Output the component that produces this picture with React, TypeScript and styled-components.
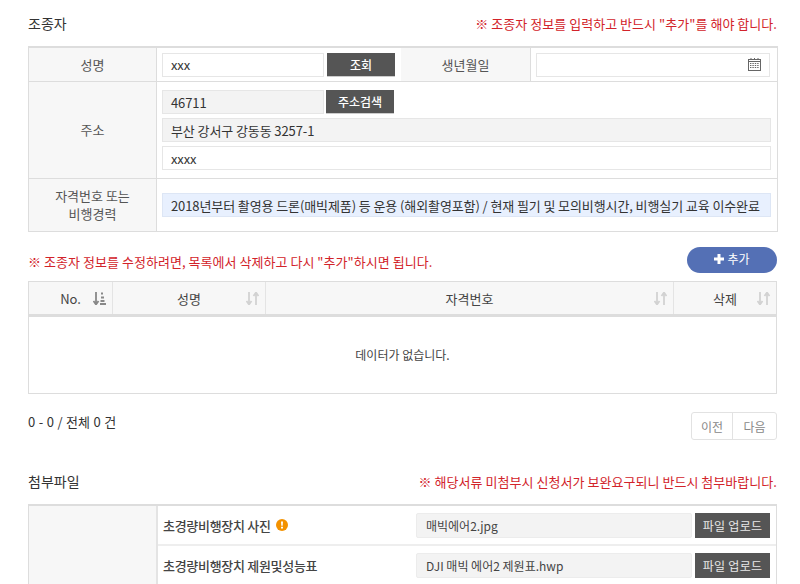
import { FC } from "react";
import styled, { createGlobalStyle } from "styled-components";

const GlobalStyle = createGlobalStyle`
  html, body {
    margin: 0;
    padding: 0;
    background: #fff;
    overflow: hidden;
  }
  body {
    font-family: "Noto Sans CJK KR", "Noto Sans", sans-serif;
    font-size: 13px;
    color: #333;
  }
`;

const Page = styled.div`
  width: 800px;
  height: 584px;
  overflow: hidden;
  box-sizing: border-box;
  padding: 12px 23px 0 28px;
`;

const SectionHead = styled.div<{ $height: number; $top?: number; $bottom?: number }>`
  display: flex;
  justify-content: space-between;
  align-items: center;
  height: ${(p) => p.$height}px;
  margin-top: ${(p) => p.$top ?? 0}px;
  margin-bottom: ${(p) => p.$bottom ?? 0}px;
`;

const Title = styled.h3`
  margin: 0;
  font-size: 14px;
  font-weight: 400;
  color: #333;
`;

const Notice = styled.p`
  margin: 0;
  font-size: 13px;
  color: #d2232a;
  letter-spacing: 0.04px;
`;

const ListNotice = styled(Notice)`
  margin-top: 3px;
`;

const FormBox = styled.div`
  border: 1px solid #ddd;
  border-top-width: 2px;
  margin-right: -1px;
`;

const Row = styled.div<{ $height: number; $last?: boolean }>`
  display: flex;
  height: ${(p) => p.$height}px;
  border-bottom: ${(p) => (p.$last ? "none" : "1px solid #ddd")};
`;

const Label = styled.div<{ $width: number }>`
  flex: none;
  box-sizing: border-box;
  width: ${(p) => p.$width}px;
  display: flex;
  align-items: center;
  justify-content: center;
  text-align: center;
  line-height: 18px;
  background: #f7f7f7;
  border-right: 1px solid #ddd;
  color: #555;
`;

const Cell = styled.div<{ $width?: number; $right?: number }>`
  flex: ${(p) => (p.$width ? "none" : "1")};
  width: ${(p) => (p.$width ? `${p.$width}px` : "auto")};
  min-width: 0;
  box-sizing: border-box;
  display: flex;
  align-items: center;
  gap: 3px;
  padding: 0 ${(p) => p.$right ?? 6}px 0 5px;
`;

const Field = styled.div<{ $tone?: "plain" | "gray" | "blue"; $width?: number }>`
  flex: ${(p) => (p.$width ? "none" : "1")};
  width: ${(p) => (p.$width ? `${p.$width}px` : "auto")};
  min-width: 0;
  height: 24px;
  box-sizing: border-box;
  display: flex;
  align-items: center;
  justify-content: space-between;
  padding: 0 8px;
  white-space: nowrap;
  overflow: hidden;
  font-size: 13px;
  letter-spacing: -0.1px;
  color: #333;
  border: 1px solid ${(p) => (p.$tone === "blue" ? "#dde6f5" : "#e6e6e6")};
  background: ${(p) =>
    p.$tone === "gray" ? "#f3f3f3" : p.$tone === "blue" ? "#e8f0fe" : "#fff"};
`;

const StackCell = styled.div`
  flex: 1;
  display: flex;
  flex-direction: column;
  justify-content: center;
  gap: 4px;
  padding: 0 6px 0 5px;

  & > ${Field} {
    flex: none;
  }
`;

const InputLine = styled.div`
  display: flex;
  gap: 2px;
`;

const DarkButton = styled.button<{ $width: number }>`
  flex: none;
  width: ${(p) => p.$width}px;
  height: 24px;
  padding: 0;
  border: 1px solid #ccc;
  border-width: 0 0 1px;
  background: #555;
  color: #fff;
  font-family: inherit;
  font-size: 12px;
  font-weight: 500;
`;

const AddButton = styled.button`
  width: 90px;
  height: 26px;
  margin-top: -1px;
  padding: 0 0 2px;
  border: 0;
  border-radius: 13px;
  background: #5470b5;
  color: #fff;
  font-family: inherit;
  font-size: 12px;
  display: flex;
  align-items: center;
  justify-content: center;
  gap: 3px;
`;

const ListBox = styled.div`
  border: 1px solid #ddd;
`;

const ListHead = styled.div`
  display: grid;
  grid-template-columns: 84px 153px 408px 1fr;
  height: 32px;
  background: #f7f7f7;
  border-bottom: 3px solid #ddd;
`;

const HeadCell = styled.div<{ $last?: boolean }>`
  position: relative;
  display: flex;
  align-items: center;
  justify-content: center;
  color: #444;
  border-right: ${(p) => (p.$last ? "none" : "1px solid #e4e4e4")};
`;

const SortMark = styled.svg`
  position: absolute;
  right: 6px;
  top: 10px;
`;

const EmptyBody = styled.div`
  height: 76px;
  padding-bottom: 2px;
  box-sizing: border-box;
  display: flex;
  align-items: center;
  justify-content: center;
  font-size: 12px;
  color: #444;
`;

const PagerRow = styled.div`
  display: flex;
  justify-content: space-between;
  align-items: center;
  margin-top: 18px;
  height: 28px;
`;

const PageInfo = styled.span`
  font-size: 13px;
  word-spacing: 0.6px;
  color: #333;
  margin-top: -10px;
`;

const Pager = styled.div`
  display: flex;
  height: 28px;
  box-sizing: border-box;
  border: 1px solid #e2e2e2;
  border-radius: 3px;
`;

const PagerItem = styled.span<{ $first?: boolean }>`
  width: ${(p) => (p.$first ? 41 : 43)}px;
  box-sizing: border-box;
  display: flex;
  align-items: center;
  justify-content: center;
  font-size: 12px;
  color: #888;
  border-right: ${(p) => (p.$first ? "1px solid #e2e2e2" : "none")};
`;

const FileBox = styled.div`
  display: flex;
  border: 1px solid #ddd;
  border-top-width: 2px;
`;

const FileSide = styled.div`
  width: 129px;
  box-sizing: border-box;
  flex: none;
  background: #f7f7f7;
  border-right: 2px solid #e4e4e4;
`;

const FileRows = styled.div`
  flex: 1;
`;

const FileRow = styled.div`
  display: grid;
  grid-template-columns: 250px 1fr 75px;
  align-items: center;
  column-gap: 3px;
  height: 38px;
  padding: 0 6px 0 5px;
  border-bottom: 2px solid #eee;
`;

const FileName = styled.div`
  display: flex;
  align-items: center;
  gap: 5px;
  font-size: 13px;
  letter-spacing: -0.3px;
  font-weight: 500;
  color: #444;
`;

const FileField = styled.div`
  height: 25px;
  box-sizing: border-box;
  display: flex;
  align-items: center;
  padding: 0 9px;
  font-size: 12px;
  color: #444;
  background: #f3f3f3;
  border: 1px solid #ececec;
  border-radius: 2px;
`;

const UploadButton = styled.button`
  height: 25px;
  padding: 0;
  border: 0;
  background: #555;
  color: #e8e8e8;
  font-family: inherit;
  font-size: 12px;
  letter-spacing: 0.3px;
`;

const CalendarIcon: FC = () => (
  <svg width="13" height="13" viewBox="0 0 13 13" fill="none" stroke="#666">
    <rect x="0.5" y="1.5" width="12" height="11" />
    <path d="M0.5 3.5h12" />
    <path d="M3 0v2M6.5 0v2M10 0v2" />
    <path d="M2 5.5h9M2 7.5h9M2 9.5h9" strokeDasharray="1.4 1" />
  </svg>
);

const Sort: FC<{ active?: boolean }> = ({ active }) => (
  <SortMark width="13" height="13" viewBox="0 0 13 13" fill="none">
    <path
      d="M3 0v12M.5 9 3 12.5 5.500 9"
      stroke={active ? "#888" : "#d2d2d2"}
      strokeWidth="1.8"
    />
    {active ? (
      <path d="M8 1.500h2M8 5.500h3M7.500 9h4M7 12h6" stroke="#888" strokeWidth="1.800" />
    ) : (
      <path d="M10 13V1M7.500 4 10 .5 12.500 4" stroke="#d2d2d2" strokeWidth="1.800" />
    )}
  </SortMark>
);

const columns = [
  { label: "No.", active: true },
  { label: "성명" },
  { label: "자격번호" },
  { label: "삭제" },
];

const files = [
  { name: "초경량비행장치 사진", file: "매빅에어2.jpg", warn: true },
  { name: "초경량비행장치 제원및성능표", file: "DJI 매빅 에어2 제원표.hwp" },
];

const App: FC = () => (
  <Page>
    <GlobalStyle />
    <SectionHead $height={22} $bottom={12}>
      <Title>조종자</Title>
      <Notice>※ 조종자 정보를 입력하고 반드시 "추가"를 해야 합니다.</Notice>
    </SectionHead>
    <FormBox>
      <Row $height={33}>
        <Label $width={128}>성명</Label>
        <Cell $width={244}>
          <Field>xxx</Field>
          <DarkButton $width={68}>조회</DarkButton>
        </Cell>
        <Label $width={130}>생년월일</Label>
        <Cell $right={7}>
          <Field>
            <span />
            <CalendarIcon />
          </Field>
        </Cell>
      </Row>
      <Row $height={96}>
        <Label $width={128}>주소</Label>
        <StackCell>
          <InputLine>
            <Field $tone="gray" $width={162}>46711</Field>
            <DarkButton $width={68}>주소검색</DarkButton>
          </InputLine>
          <Field $tone="gray">부산 강서구 강동동 3257-1</Field>
          <Field>xxxx</Field>
        </StackCell>
      </Row>
      <Row $height={52} $last>
        <Label $width={128}>
          자격번호 또는
          <br />
          비행경력
        </Label>
        <Cell>
          <Field $tone="blue">
            2018년부터 촬영용 드론(매빅제품) 등 운용 (해외촬영포함) / 현재 필기 및 모의비행시간, 비행실기 교육 이수완료
          </Field>
        </Cell>
      </Row>
    </FormBox>

    <SectionHead $height={26} $top={15} $bottom={8}>
      <ListNotice>※ 조종자 정보를 수정하려면, 목록에서 삭제하고 다시 "추가"하시면 됩니다.</ListNotice>
      <AddButton>
        <svg width="10" height="10" viewBox="0 0 10 10" fill="#fff">
          <path d="M3.5 0h3v3.5H10v3H6.5V10h-3V6.5H0v-3h3.5z" />
        </svg>
        추가
      </AddButton>
    </SectionHead>

    <ListBox>
      <ListHead>
        {columns.map((col, index) => (
          <HeadCell key={col.label} $last={index === columns.length - 1}>
            {col.label}
            <Sort active={col.active} />
          </HeadCell>
        ))}
      </ListHead>
      <EmptyBody>데이터가 없습니다.</EmptyBody>
    </ListBox>

    <PagerRow>
      <PageInfo>0 - 0 / 전체 0 건</PageInfo>
      <Pager>
        <PagerItem $first>이전</PagerItem>
        <PagerItem>다음</PagerItem>
      </Pager>
    </PagerRow>

    <SectionHead $height={22} $top={30} $bottom={12}>
      <Title>첨부파일</Title>
      <Notice>※ 해당서류 미첨부시 신청서가 보완요구되니 반드시 첨부바랍니다.</Notice>
    </SectionHead>

    <FileBox>
      <FileSide />
      <FileRows>
        {files.map((item) => (
          <FileRow key={item.name}>
            <FileName>
              {item.name}
              {item.warn && (
                <svg width="12" height="12" viewBox="0 0 12 12">
                  <circle cx="6" cy="6" r="6" fill="#f39200" />
                  <path d="M5 2.5h2l-.3 4.2H5.3zM5 7.7h2v1.8H5z" fill="#fff" />
                </svg>
              )}
            </FileName>
            <FileField>{item.file}</FileField>
            <UploadButton>파일 업로드</UploadButton>
          </FileRow>
        ))}
      </FileRows>
    </FileBox>
  </Page>
);

export default App;
